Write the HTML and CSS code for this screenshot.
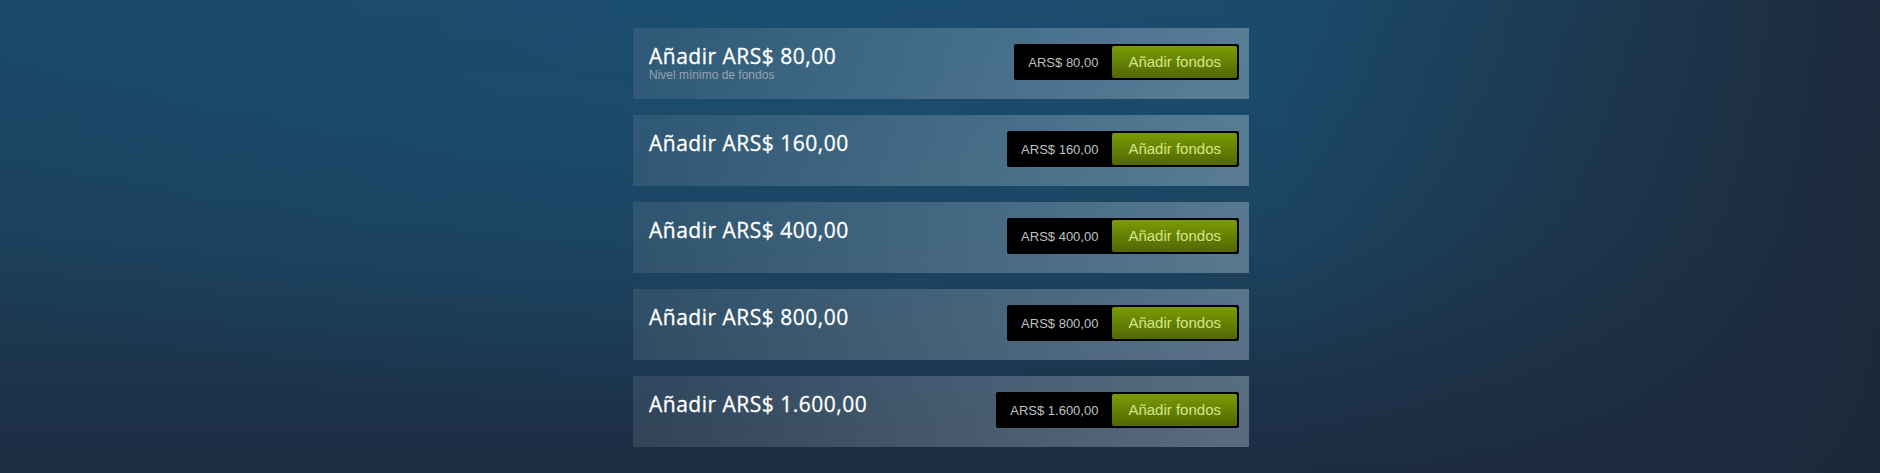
FILE: index.html
```html
<!DOCTYPE html>
<html lang="es">
<head>
  <meta charset="UTF-8" />
  <title>Añadir fondos a tu cartera</title>
  <link rel="stylesheet" href="styles.css">
</head>
<body>
  <div class="wallet">

    <div class="purchase">
      <div class="purchase-info">
        <h1>Añadir ARS$ 80,00</h1>
        <div class="note">Nivel mínimo de fondos</div>
      </div>
      <div class="action">
        <div class="price">ARS$ 80,00</div>
        <a href="#" class="btn-green">Añadir fondos</a>
      </div>
    </div>

    <div class="purchase">
      <div class="purchase-info">
        <h1>Añadir ARS$ 160,00</h1>
      </div>
      <div class="action">
        <div class="price">ARS$ 160,00</div>
        <a href="#" class="btn-green">Añadir fondos</a>
      </div>
    </div>

    <div class="purchase">
      <div class="purchase-info">
        <h1>Añadir ARS$ 400,00</h1>
      </div>
      <div class="action">
        <div class="price">ARS$ 400,00</div>
        <a href="#" class="btn-green">Añadir fondos</a>
      </div>
    </div>

    <div class="purchase">
      <div class="purchase-info">
        <h1>Añadir ARS$ 800,00</h1>
      </div>
      <div class="action">
        <div class="price">ARS$ 800,00</div>
        <a href="#" class="btn-green">Añadir fondos</a>
      </div>
    </div>

    <div class="purchase">
      <div class="purchase-info">
        <h1>Añadir ARS$ 1.600,00</h1>
      </div>
      <div class="action">
        <div class="price">ARS$ 1.600,00</div>
        <a href="#" class="btn-green">Añadir fondos</a>
      </div>
    </div>

  </div>
</body>
</html>
```

FILE: styles.css
```css
* {
  box-sizing: border-box;
}

body {
  margin: 0;
  padding-left: 2px;
  min-height: 100vh;
  font-family: Arial, "Liberation Sans", sans-serif;
  background-color: #1b2838;
  background-image:
    linear-gradient(to right, rgba(29, 40, 58, 0) 68%, rgba(29, 40, 58, 0.95) 100%),
    radial-gradient(ellipse 60% 90% at 42% 0%, rgba(27, 78, 112, 0.9) 0%, rgba(27, 78, 112, 0) 100%),
    linear-gradient(to bottom, #1b4867 0%, #1c3f5a 50%, #1c2c42 100%);
}

.wallet {
  width: 616px;
  margin: 0 auto;
  padding-top: 28px;
  display: flex;
  flex-direction: column;
  gap: 16px;
}

.purchase {
  height: 71px;
  padding: 16px 10px 0 16px;
  display: flex;
  justify-content: space-between;
  align-items: flex-start;
  background: linear-gradient(-60deg, rgba(226, 244, 255, 0.3) 5%, rgba(120, 140, 155, 0.22) 95%);
}

.purchase h1 {
  margin: 0;
  font-family: "Open Sans", sans-serif;
  font-size: 21px;
  font-weight: normal;
  letter-spacing: 0.5px;
  line-height: 24px;
  color: #fff;
  -webkit-text-stroke: 0.3px #fff;
}

.note {
  font-size: 12px;
  line-height: 14px;
  color: #97a3ad;
}

.action {
  display: flex;
  align-items: center;
  background: #000;
  padding: 2px;
  border-radius: 2px;
}

.price {
  padding: 0 12px;
  font-size: 13px;
  color: #bfc2c5;
}

.btn-green {
  margin-left: 2px;
  height: 32px;
  line-height: 32px;
  padding: 0 16px;
  font-size: 15px;
  color: #d2e885;
  text-decoration: none;
  border-radius: 2px;
  background: linear-gradient(to bottom, #799905 5%, #536904 95%);
}
```
